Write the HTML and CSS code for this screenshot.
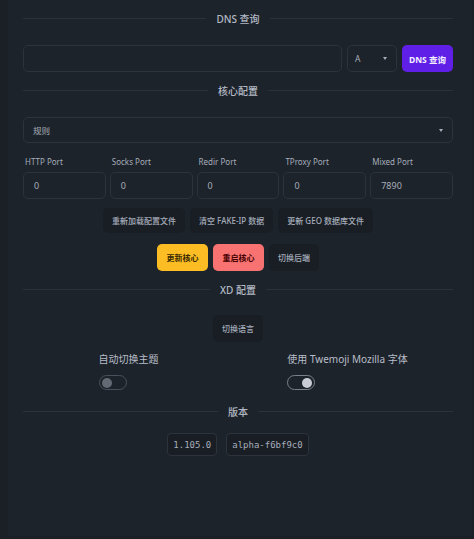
FILE: index.html
```html
<!DOCTYPE html>
<html lang="zh">
<head>
<meta charset="utf-8">
<title>Settings</title>
<link rel="stylesheet" href="styles.css">
</head>
<body>
<div class="panel">
  <div class="divider d1"><span>DNS 查询</span></div>
  <div class="dns-row">
    <div class="input grow"></div>
    <div class="select small"><span>A</span><span class="caret"></span></div>
    <button class="btn primary">DNS 查询</button>
  </div>

  <div class="divider d2"><span>核心配置</span></div>
  <div class="select wide"><span>规则</span><span class="caret"></span></div>
  <div class="ports">
    <div class="port"><label>HTTP Port</label><div class="input">0</div></div>
    <div class="port"><label>Socks Port</label><div class="input">0</div></div>
    <div class="port"><label>Redir Port</label><div class="input">0</div></div>
    <div class="port"><label>TProxy Port</label><div class="input">0</div></div>
    <div class="port"><label>Mixed Port</label><div class="input">7890</div></div>
  </div>
  <div class="btn-row r1">
    <button class="btn ghost">重新加载配置文件</button>
    <button class="btn ghost">清空 FAKE-IP 数据</button>
    <button class="btn ghost">更新 GEO 数据库文件</button>
  </div>
  <div class="btn-row r2">
    <button class="btn warning">更新核心</button>
    <button class="btn error">重启核心</button>
    <button class="btn ghost">切换后端</button>
  </div>

  <div class="divider d3"><span>XD 配置</span></div>
  <div class="btn-row r3">
    <button class="btn ghost">切换语言</button>
  </div>
  <div class="opts">
    <div class="opt"><div class="opt-inner"><div class="opt-label">自动切换主题</div><div class="toggle"><span class="knob"></span></div></div></div>
    <div class="opt"><div class="opt-inner"><div class="opt-label">使用 Twemoji Mozilla 字体</div><div class="toggle on"><span class="knob"></span></div></div></div>
  </div>

  <div class="divider d4"><span>版本</span></div>
  <div class="badges">
    <span class="badge">1.105.0</span>
    <span class="badge">alpha-f6bf9c0</span>
  </div>
</div>
</body>
</html>
```

FILE: styles.css
```css
html, body {
  margin: 0;
  padding: 0;
  background: #1b2027;
}
body {
  font-family: "Noto Sans", "Noto Sans CJK SC", sans-serif;
  color: #a6adbb;
  height: 539px;
  overflow: hidden;
}
.panel {
  margin-left: 8px;
  width: 464px;
  height: 536px;
  box-sizing: border-box;
  padding: 0 19px 0 15px;
  background: #1d232a;
  display: flex;
  flex-direction: column;
}
.divider {
  display: flex;
  align-items: center;
  gap: 10px;
  height: 14px;
  font-size: 10px;
  font-weight: 500;
  color: #b3b9c5;
  white-space: nowrap;
}
.divider::before, .divider::after {
  content: "";
  flex: 1;
  height: 1px;
  background: #2a323c;
}
.d1 { margin-top: 11px; }
.d2 { margin-top: 11px; }
.d3 { margin-top: 11px; }
.d4 { margin-top: 14px; }

.dns-row {
  display: flex;
  gap: 5px;
  margin-top: 20px;
  height: 27px;
}
.input {
  box-sizing: border-box;
  height: 27px;
  border: 1px solid #2c333d;
  border-radius: 5px;
  background: #1d232a;
  font-size: 9px;
  color: #a6adbb;
  display: flex;
  align-items: center;
  padding-left: 10px;
}
.grow { flex: 1; }
.select {
  box-sizing: border-box;
  border: 1px solid #2c333d;
  border-radius: 5px;
  display: flex;
  align-items: center;
  justify-content: space-between;
  font-size: 8.5px;
  color: #a6adbb;
}
.select.small {
  width: 50px;
  height: 27px;
  padding: 0 9px 0 7px;
}
.select.wide {
  margin-top: 20px;
  height: 26px;
  padding: 0 9px 0 9px;
}
.caret {
  width: 0;
  height: 0;
  border-left: 2.5px solid transparent;
  border-right: 2.5px solid transparent;
  border-top: 3px solid #a6adbb;
}
.btn {
  font-family: inherit;
  border: none;
  border-radius: 5px;
  font-size: 8px;
  font-weight: 600;
  padding: 0 9px;
  white-space: nowrap;
  cursor: pointer;
}
.primary {
  width: 51px;
  height: 27px;
  padding: 0;
  background: #5f1fe6;
  color: #f4f0ff;
  font-size: 8.5px;
  font-weight: 700;
}
.ports {
  display: grid;
  grid-template-columns: repeat(5, 1fr);
  gap: 4px;
  margin-top: 13px;
}
.port label {
  display: block;
  font-size: 8px;
  line-height: 12px;
  height: 12px;
  padding-left: 2px;
  color: #a6adbb;
  margin-bottom: 4px;
}
.btn-row {
  display: flex;
  justify-content: center;
  gap: 5px;
}
.r1 { margin-top: 9px; }
.r1 .btn { height: 25px; }
.r2 { margin-top: 11px; }
.r2 .btn { height: 27px; }
.r3 { margin-top: 19px; }
.r3 .btn { height: 27px; }
.ghost {
  background: #191e24;
  color: #a6adbb;
  font-weight: 500;
  padding: 0 9px;
}
.warning {
  background: #fbbd23;
  color: #382800;
  width: 51px;
  padding: 0;
}
.error {
  background: #f87272;
  color: #470000;
  width: 51px;
  padding: 0;
}
.opts {
  display: grid;
  grid-template-columns: 1fr 1fr;
  margin-top: 9px;
}
.opt {
  display: flex;
  justify-content: center;
}
.opt:first-child { padding-right: 4px; }
.opt:last-child { padding-left: 4px; }
.opt-inner {
  display: flex;
  flex-direction: column;
  align-items: flex-start;
}
.opt-label {
  font-size: 10px;
  line-height: 16px;
  color: #b8bec9;
}
.toggle {
  margin-top: 8px;
  box-sizing: border-box;
  width: 28px;
  height: 15px;
  border: 1px solid #4a515c;
  border-radius: 8px;
  position: relative;
  background: #1d232a;
}
.knob {
  position: absolute;
  top: 1.5px;
  left: 2px;
  width: 10px;
  height: 10px;
  border-radius: 50%;
  background: #646a74;
}
.toggle.on { border-color: #7b818c; }
.toggle.on .knob {
  left: auto;
  right: 2px;
  background: #c9ced6;
}
.badges {
  display: flex;
  justify-content: center;
  gap: 9px;
  margin-top: 15px;
}
.badge {
  box-sizing: border-box;
  height: 23px;
  display: inline-flex;
  align-items: center;
  padding: 0 5px;
  border: 1px solid #2c333d;
  border-radius: 4px;
  background: #191e24;
  font-family: "DejaVu Sans Mono", monospace;
  font-size: 9px;
  color: #a6adbb;
}
```
